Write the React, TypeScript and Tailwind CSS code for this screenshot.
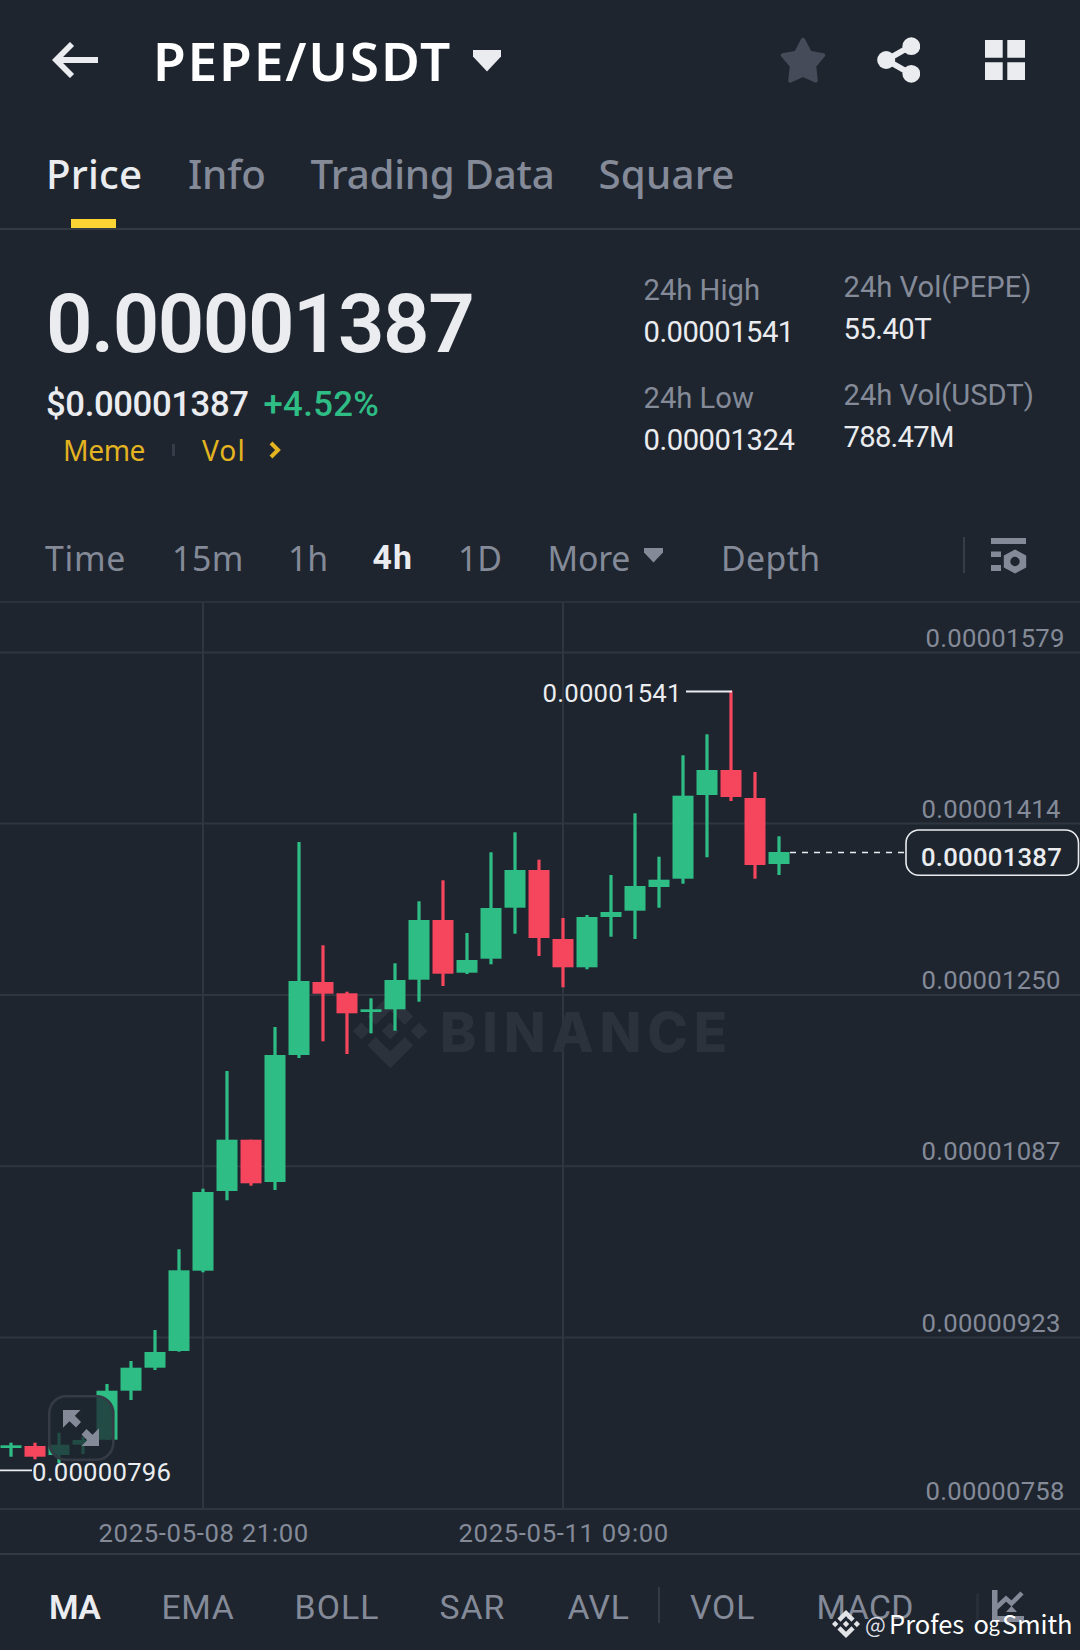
const UP = '#2ebd85';
const DOWN = '#f6465d';

// wick top, body top, body bottom, wick bottom, direction
type Candle = [number, number, number, number, 'up' | 'down'];

const candles: Candle[] = [
  [1442.7, 1445.3, 1448, 1456.7, 'up'],
  [1442.7, 1446, 1456.7, 1459.3, 'down'],
  [1432.7, 1444.7, 1455, 1463, 'up'],
  [1436.7, 1440, 1444.7, 1454, 'up'],
  [1384, 1390.7, 1439.7, 1440, 'up'],
  [1361, 1367.7, 1390.7, 1400, 'up'],
  [1330, 1352, 1367.7, 1370, 'up'],
  [1249.3, 1270.3, 1351, 1351.7, 'up'],
  [1188.7, 1192, 1270.7, 1272.3, 'up'],
  [1071, 1139.7, 1191, 1200.3, 'up'],
  [1139.7, 1139.7, 1183.3, 1185.7, 'down'],
  [1027, 1055, 1182, 1190, 'up'],
  [842, 981, 1055, 1058, 'up'],
  [945.3, 982, 993.7, 1041.3, 'down'],
  [991.7, 993.3, 1013.3, 1054, 'down'],
  [998.3, 1009.3, 1012, 1033.3, 'up'],
  [963.3, 980, 1009.3, 1030.7, 'up'],
  [901.3, 920, 979.7, 1001.7, 'up'],
  [880.3, 920, 973.7, 986, 'down'],
  [933, 960, 972.7, 974, 'up'],
  [852.3, 908, 958.7, 964.3, 'up'],
  [832.3, 870, 907.7, 933.7, 'up'],
  [859.7, 870, 938, 956, 'down'],
  [918, 939, 967.3, 987.3, 'down'],
  [915, 917, 967.3, 969.3, 'up'],
  [875, 912, 917, 936.7, 'up'],
  [813.3, 886, 910.7, 939, 'up'],
  [856.7, 879.7, 887, 907.7, 'up'],
  [755.3, 795.7, 878.7, 883.7, 'up'],
  [734.3, 770, 795, 857.3, 'up'],
  [690.7, 770, 797, 801, 'down'],
  [772, 798, 865, 878.7, 'down'],
  [836.3, 852, 864, 875, 'up'],
];

const gridLines = [652.5, 823.5, 995, 1166.3, 1337.5, 1509];

const priceLabels = [
  { text: '0.00001579', x: 925.5, y: 646.5 },
  { text: '0.00001414', x: 921.5, y: 817.5 },
  { text: '0.00001250', x: 921.5, y: 988.5 },
  { text: '0.00001087', x: 921.5, y: 1159.5 },
  { text: '0.00000923', x: 921.5, y: 1331.5 },
  { text: '0.00000758', x: 925.5, y: 1499.5 },
];

function BinanceMark() {
  return (
    <>
      <path d="M38.7 53.2 63.3 28.6 87.9 53.2 102.2 38.9 63.3 0 24.4 38.9Z" />
      <path d="M0 63.3 14.3 49 28.6 63.3 14.3 77.6Z" />
      <path d="M38.7 73.4 63.3 98 87.9 73.4 102.2 87.7 63.3 126.6 24.4 87.7Z" />
      <path d="M98 63.3 112.3 49 126.6 63.3 112.3 77.6Z" />
      <path d="M77.8 63.3 63.3 48.8 48.8 63.3 63.3 77.8Z" />
    </>
  );
}

function Header() {
  return (
    <header className="flex h-[120px] items-center pr-[55px] pl-[52px]">
      <svg width="46" height="36" viewBox="0 0 46 36" fill="none" stroke="#eaecef" strokeWidth="5.8">
        <path d="M4 18H46" />
        <path d="M20 2 4 18 20 34" />
      </svg>
      <h1 className="ml-[55px] w-[299px] pt-[2px] font-['Noto_Sans',sans-serif] text-[53.2px] leading-[60px] font-semibold tracking-[1.85px] text-white">
        PEPE/USDT
      </h1>
      <svg className="mt-[2px] ml-[21px]" width="28" height="22" viewBox="0 0 28 22" fill="#eaecef">
        <path d="M0 0H28V6.5L14 21.5 0 6.5Z" />
      </svg>
      <svg className="ml-auto" width="46" height="46" viewBox="0 0 46 46">
        <path
          d="M23 2.8 29.8 15.8 43.2 18.2 34.2 29 35.8 43.6 23 38 10.2 43.6 11.8 29 2.8 18.2 16.2 15.8Z"
          fill="#454b58"
          stroke="#454b58"
          strokeWidth="4"
          strokeLinejoin="round"
        />
      </svg>
      <svg className="ml-[51px]" width="43" height="46" viewBox="0 0 43 46" fill="#eaecef">
        <path d="M34 9 9.5 23 34 37" fill="none" stroke="#eaecef" strokeWidth="6" />
        <circle cx="9.2" cy="23" r="9" />
        <circle cx="34.3" cy="9.2" r="8.9" />
        <circle cx="34.3" cy="36.8" r="8.9" />
      </svg>
      <svg className="ml-[65px]" width="40" height="40" viewBox="0 0 40 40" fill="#eaecef">
        <path d="M0 0H17.7V17.7H0Z M22.3 0H40V17.7H22.3Z M0 22.3H17.7V40H0Z M22.3 22.3H40V40H22.3Z" />
      </svg>
    </header>
  );
}

function Tabs() {
  return (
    <nav className="flex h-[110px] border-b-2 border-[#333a44] pt-8 pl-[46px] font-['Noto_Sans',sans-serif] text-[40.3px] leading-[44px] font-medium whitespace-nowrap text-[#848a98]">
      <div className="w-[142px] text-[#eaecef]">
        <div className="tracking-[0.2px]">Price</div>
        <div className="mt-[23px] ml-[25px] h-[9px] w-[45px] bg-[#fcd535]" />
      </div>
      <div className="w-[122.5px] tracking-[-0.2px]">Info</div>
      <div className="w-[288px] tracking-[-0.3px]">Trading Data</div>
      <div className="tracking-[0.2px]">Square</div>
    </nav>
  );
}

function Stat({ label, value, tracking }: { label: string; value: string; tracking: string }) {
  return (
    <div>
      <div className="text-[#848a98]">{label}</div>
      <div className={`font-[450] text-[#eaecef] ${tracking}`}>{value}</div>
    </div>
  );
}

function Summary() {
  return (
    <section className="flex h-[286px] whitespace-nowrap">
      <div className="w-[643.5px] pt-[52px] pl-[45px]">
        <div className="pl-px text-[81.5px] leading-[84px] font-semibold tracking-[-1.5px] text-[#eaecef]">0.00001387</div>
        <div className="mt-[19px] flex pl-px text-[34.7px] leading-[38px] font-medium">
          <span className="w-[217.5px] tracking-[-0.38px] text-[#eaecef]">$0.00001387</span>
          <span className="tracking-[0.35px] text-[#2ebd85]">+4.52%</span>
        </div>
        <div className="mt-3 flex items-center pl-[18px] text-[28.2px] leading-[30px] text-[#e3b320]">
          <span className="w-[109px] font-['Noto_Sans',sans-serif] tracking-[-0.4px]">Meme</span>
          <span className="h-3 w-[3px] bg-[#363d49]" />
          <span className="ml-[27px] w-[45px] font-['Noto_Sans',sans-serif] tracking-[1px]">Vol</span>
          <svg className="ml-[22px]" width="12" height="18" viewBox="0 0 12 18" fill="none" stroke="#e3b320" strokeWidth="4">
            <path d="M2 2 9 9 2 16" />
          </svg>
        </div>
      </div>
      <div className="flex w-[200px] flex-col gap-6 pt-[39px] text-[29.2px] leading-[42px]">
        <Stat label="24h High" value="0.00001541" tracking="tracking-[-0.51px]" />
        <Stat label="24h Low" value="0.00001324" tracking="tracking-[-0.45px]" />
      </div>
      <div className="flex flex-col gap-6 pt-9 text-[29.2px] leading-[42px]">
        <Stat label="24h Vol(PEPE)" value="55.40T" tracking="tracking-[-0.51px]" />
        <Stat label="24h Vol(USDT)" value="788.47M" tracking="tracking-[-0.7px]" />
      </div>
    </section>
  );
}

function Intervals() {
  return (
    <div className="flex h-[87px] items-center border-b-2 border-[#2b323c] pl-[45px] font-['Noto_Sans',sans-serif] text-[33.8px] leading-10 whitespace-nowrap text-[#848a98]">
      <div className="mb-[2px] flex">
        <span className="w-[127px] tracking-[0.7px]">Time</span>
        <span className="w-[116px] tracking-[0.6px]">15m</span>
        <span className="w-[84.5px]">1h</span>
        <span className="w-[85.5px] font-[Roboto,sans-serif] font-bold tracking-[1px] text-[#eaecef]">4h</span>
        <span className="w-[89.5px]">1D</span>
        <span className="w-[96px] tracking-[-0.2px]">More</span>
      </div>
      <svg width="19" height="15" viewBox="0 0 19 15" className="mb-1.5" fill="#848a98">
        <path d="M0 0H19V4.5L9.5 14.5 0 4.5Z" />
      </svg>
      <span className="mb-[2px] ml-[58.5px] w-[242px] tracking-[0.4px]">Depth</span>
      <span className="mb-[7px] h-9 w-0.5 bg-[#363d48]" />
      <svg className="mb-[5px] ml-[26px]" width="36" height="36" viewBox="0 0 36 36" fill="#848a98">
        <path d="M0 0H35V6H0Z M0 13.5H10V19H0Z M0 27H10V33H0Z" />
        <path
          fillRule="evenodd"
          d="M24 11.5 35.2 17.5V29.5L24 35.5 12.8 29.5V17.5Z M24 18.8a4.7 4.7 0 1 0 0 9.4 4.7 4.7 0 0 0 0-9.4Z"
        />
      </svg>
    </div>
  );
}

function Chart() {
  return (
    <svg className="block" width="1080" height="950" viewBox="0 603 1080 950" fontFamily="Roboto, sans-serif">
      <g stroke="#2f3640" strokeWidth="2">
        {gridLines.map((y) => (
          <line key={y} x1="0" x2="1080" y1={y} y2={y} />
        ))}
        <line x1="203" x2="203" y1="603" y2="1509" />
        <line x1="563" x2="563" y1="603" y2="1509" />
      </g>

      {/* Brand watermark behind the candles */}
      <g fill="#2b323c">
        <g transform="translate(353 993.7) scale(0.589)">
          <BinanceMark />
        </g>
        <text x="440" y="1051.7" fontFamily="Inter" fontSize="54.8" fontWeight="800" letterSpacing="5.8">
          BINANCE
        </text>
      </g>

      {candles.map(([high, top, bottom, low, dir], i) => {
        const cx = 11 + i * 24;
        return (
          <g key={i} fill={dir === 'up' ? UP : DOWN}>
            <rect x={cx - 1.6} y={high} width="3.2" height={low - high} />
            <rect x={cx - 10.5} y={top} width="21" height={bottom - top} />
          </g>
        );
      })}

      <g fontSize="25.7" letterSpacing="0.25" fill="#848a98">
        {priceLabels.map((l) => (
          <text key={l.text} x={l.x} y={l.y}>
            {l.text}
          </text>
        ))}
        <g letterSpacing="0.65">
          <text x="98.5" y="1541.5">2025-05-08 21:00</text>
          <text x="458.5" y="1541.5">2025-05-11 09:00</text>
        </g>
      </g>

      {/* Current price */}
      <line x1="790" x2="905" y1="852.5" y2="852.5" stroke="#eaecef" strokeWidth="1.6" strokeDasharray="6 6" />
      <rect x="906" y="830" width="172.5" height="45.3" rx="13" fill="#1e252f" stroke="#eaecef" strokeWidth="1.6" />

      {/* Expand button */}
      <rect x="49.3" y="1396.3" width="64" height="63.5" rx="17" fill="#1e252f" fillOpacity="0.75" stroke="#343b45" strokeWidth="2.6" />
      <path
        fill="#848a98"
        d="M63 1410H80.5L74.8 1415.8 81 1422 76 1427.5 69.5 1421.2 63 1427.7Z M99 1446H81.5L87.2 1440.2 81.5 1434.5 86.5 1429 92.5 1434.8 99 1428.3Z"
      />

      <g fontSize="25.7" letterSpacing="0.25" fill="#eaecef">
        <text x="542.5" y="701.5">0.00001541</text>
        <text x="921" y="865.5" fontWeight="470">0.00001387</text>
        <text x="32" y="1480.5">0.00000796</text>
      </g>
      <path d="M686 691.5H732 M0 1470.3H32" stroke="#eaecef" strokeWidth="1.8" />
    </svg>
  );
}

function Indicators() {
  return (
    <footer className="relative flex h-[97px] items-center border-t-2 border-[#333a44] pt-[11px] pl-[49px] text-[33.8px] leading-10 whitespace-nowrap text-[#848a98]">
      <span className="w-[112.5px] font-semibold tracking-[-0.5px] text-[#eaecef]">MA</span>
      <span className="w-[133px] tracking-[0.6px]">EMA</span>
      <span className="w-[145px] tracking-[1.1px]">BOLL</span>
      <span className="w-[128px] tracking-[1px]">SAR</span>
      <span className="w-[90.5px] tracking-[0.5px]">AVL</span>
      <span className="mb-[7px] h-9 w-0.5 bg-[#343b46]" />
      <span className="ml-[30px] w-[126.5px] tracking-[0.8px]">VOL</span>
      <span className="w-[159px] tracking-[0.4px]">MACD</span>
      <span className="h-7 w-[3px] bg-[#272e38]" />
      <svg className="mb-1 ml-[13.5px]" width="32" height="32" viewBox="0 0 32 32" fill="#848a98">
        <path d="M0 0H5.5V26H32V32H0Z" />
        <path d="M4 18 14 8.5 19.5 13.5 30 3" fill="none" stroke="#848a98" strokeWidth="4.5" />
        <path d="M19.5 16 25 22H14Z" />
      </svg>

      {/* Author credit overlay */}
      <div className="absolute top-[52px] left-[832px] flex items-center font-['Noto_Sans_CJK_SC',sans-serif] text-[25.5px] leading-[26px] text-white">
        <svg className="mt-[3px]" width="28" height="28" viewBox="0 0 126.6 126.6" fill="#e3e4e8">
          <BinanceMark />
        </svg>
        <span className="ml-[5px] w-[24px] text-[22px] text-[#dcdee3]">@</span>
        <span className="w-[84.5px]">Profes</span>
        <span className="w-[15px]">o</span>
        <span className="w-[13.5px] text-[20px]">g</span>
        <span className="tracking-[-0.1px]">Smith</span>
      </div>
    </footer>
  );
}

export default function App() {
  return (
    <div className="h-[1650px] w-[1080px] overflow-hidden bg-[#1e252f] font-[Roboto,sans-serif]">
      <Header />
      <Tabs />
      <Summary />
      <Intervals />
      <Chart />
      <Indicators />
    </div>
  );
}
